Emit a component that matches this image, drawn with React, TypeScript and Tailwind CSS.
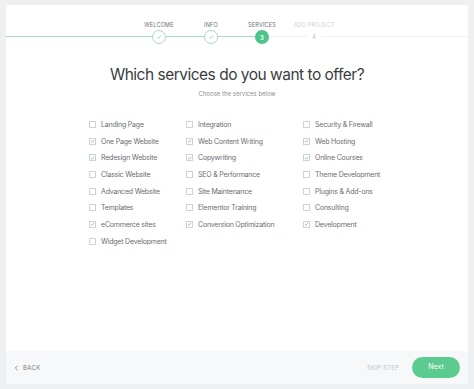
import React from "react";

const col1 = [
  ["Landing Page", false],
  ["One Page Website", true],
  ["Redesign Website", true],
  ["Classic Website", false],
  ["Advanced Website", false],
  ["Templates", false],
  ["eCommerce sites", true],
  ["Widget Development", false],
] as [string, boolean][];
const col2 = [
  ["Integration", false],
  ["Web Content Writing", true],
  ["Copywriting", true],
  ["SEO & Performance", false],
  ["Site Maintenance", false],
  ["Elementor Training", false],
  ["Conversion Optimization", true],
] as [string, boolean][];
const col3 = [
  ["Security & Firewall", false],
  ["Web Hosting", true],
  ["Online Courses", true],
  ["Theme Development", false],
  ["Plugins & Add-ons", false],
  ["Consulting", false],
  ["Development", true],
] as [string, boolean][];

function Check({ on }: { on: boolean }) {
  return (
    <div className="w-[7px] h-[7px] border border-[#cfd3d6] bg-white flex items-center justify-center shrink-0">
      {on && (
        <svg width="6" height="6" viewBox="0 0 6 6">
          <path d="M1 3.2 L2.4 4.5 L5 1.5" stroke="#6fb8a6" strokeWidth="0.9" fill="none" />
        </svg>
      )}
    </div>
  );
}

function Col({ items, w }: { items: [string, boolean][]; w: string }) {
  return (
    <div className={`flex flex-col ${w}`}>
      {items.map(([t, on]) => (
        <div key={t} className="h-[16.7px] flex items-center gap-[5px]">
          <Check on={on} />
          <span className="text-[7px] tracking-[-0.2px] text-[#6b6e71] whitespace-nowrap leading-none">{t}</span>
        </div>
      ))}
    </div>
  );
}

function Step({ label, children, faded }: { label: string; children: React.ReactNode; faded?: boolean }) {
  return (
    <div className="w-[14px] flex flex-col items-center">
      <div className={`text-[5.5px] tracking-[0.2px] whitespace-nowrap leading-[8px] ${faded ? "text-[#cfd2d4]" : "text-[#6b6f72]"}`}>
        {label}
      </div>
      <div className="mt-[1px]">{children}</div>
    </div>
  );
}

function DoneCircle() {
  return (
    <div className="w-[14px] h-[14px] rounded-full border border-[#a9d9c6] bg-white flex items-center justify-center">
      <svg width="6" height="6" viewBox="0 0 6 6">
        <path d="M1.3 3.3 L2.5 4.4 L4.8 1.6" stroke="#8fc7b3" strokeWidth="0.8" fill="none" />
      </svg>
    </div>
  );
}

export default function App() {
  return (
    <div
      className="w-[474px] h-[389px] bg-[#eef0f1] pt-[5px] pl-[6px] pr-[6px] pb-[5px]"
      style={{ fontFamily: "Inter, 'Noto Sans', sans-serif" }}
    >
      <div className="w-full h-full bg-white flex flex-col">
        {/* stepper */}
        <div className="flex items-end pt-[16px]">
          <div className="w-[146px] h-px bg-[#a9d9c6] mb-[7px]" />
          <Step label="WELCOME">
            <DoneCircle />
          </Step>
          <div className="w-[38px] h-px bg-[#a9d9c6] mb-[7px]" />
          <Step label="INFO">
            <DoneCircle />
          </Step>
          <div className="w-[37px] h-px bg-[#a9d9c6] mb-[7px]" />
          <Step label="SERVICES">
            <div className="w-[14px] h-[14px] rounded-full bg-[#4cc48b] flex items-center justify-center text-white text-[6px] font-semibold">
              3
            </div>
          </Step>
          <div className="w-[38px] h-px bg-[#eef0f1] mb-[7px]" />
          <Step label="ADD PROJECT" faded>
            <div className="w-[14px] h-[14px] rounded-full bg-white flex items-center justify-center text-[#b7bbbe] text-[5.5px]">
              4
            </div>
          </Step>
          <div className="flex-1 h-px bg-[#eef0f1] mb-[7px]" />
        </div>

        {/* body */}
        <div className="flex-1 flex flex-col">
          <h1 className="mt-[20px] text-center text-[15.5px] tracking-[-0.5px] leading-[22px] text-[#3a3d40] font-normal">
            Which services do you want to offer?
          </h1>
          <p className="mt-[4px] text-center text-[6px] leading-[8px] text-[#8a8e91]">Choose the services below</p>
          <div className="flex pl-[83px] mt-[18px]">
            <Col items={col1} w="w-[97px]" />
            <Col items={col2} w="w-[117px]" />
            <Col items={col3} w="flex-1" />
          </div>
        </div>

        {/* footer */}
        <div className="h-[33px] bg-[#f7f8f9] flex items-center pl-[8px] pr-[8px]">
          <div className="flex items-center gap-[4px] text-[6px] text-[#7a7e81] tracking-[0.3px]">
            <svg width="5" height="6" viewBox="0 0 5 6">
              <path d="M3.5 0.8 L1.3 3 L3.5 5.2" stroke="#7a7e81" strokeWidth="0.8" fill="none" />
            </svg>
            <span>BACK</span>
          </div>
          <div className="flex-1" />
          <span className="text-[6px] text-[#c2c5c8] tracking-[0.2px] mr-[13px]">SKIP STEP</span>
          <div className="w-[48px] h-[21px] rounded-full bg-[#5ccb8f] flex items-center justify-center text-white text-[7px]">
            Next
          </div>
        </div>
      </div>
    </div>
  );
}
